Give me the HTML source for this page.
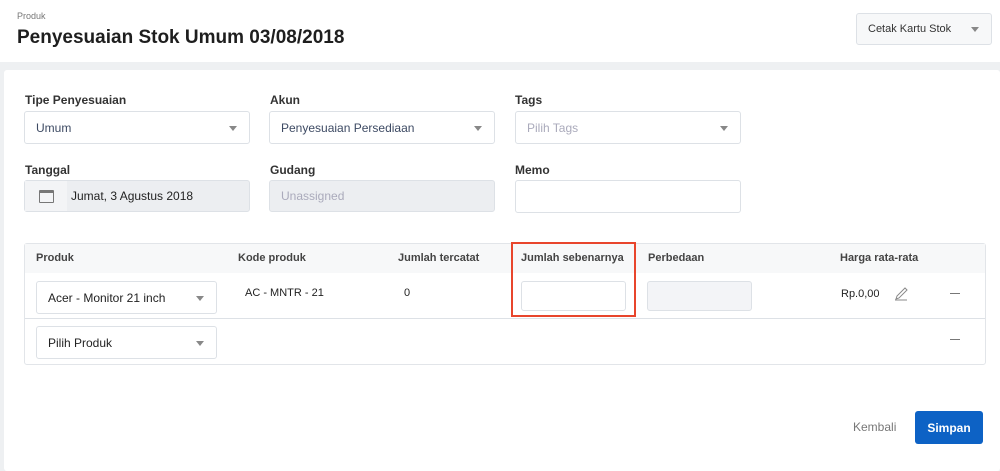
<!DOCTYPE html><html><head><style>
*{box-sizing:border-box;margin:0;padding:0}
body{width:1000px;height:471px;overflow:hidden;background:#eef0f2;font-family:"Liberation Sans",sans-serif;position:relative;color:#222}
.a{position:absolute}
.lbl{font-size:12px;font-weight:bold;color:#333}
.in{position:absolute;border:1px solid #dde1e6;border-radius:3px;background:#fff;font-size:12px;color:#3d4a63;padding-left:11px;display:flex;align-items:center}
.car{position:absolute;right:12px;top:50%;margin-top:-2px;border-left:4px solid transparent;border-right:4px solid transparent;border-top:5px solid #888}
.th{position:absolute;top:252px;font-size:11px;font-weight:bold;color:#444}
.td{position:absolute;font-size:11px;color:#222}
.dash{position:absolute;width:10px;height:1px;background:#777}
</style></head><body>
<div class="a" style="left:0;top:0;width:1000px;height:62px;background:#fff"></div>
<div class="a" style="left:17px;top:11px;font-size:9px;color:#777">Produk</div>
<div class="a" style="left:17px;top:27px;font-size:19px;font-weight:bold;color:#1e1e1e">Penyesuaian Stok Umum 03/08/2018</div>
<div class="in" style="left:856px;top:13px;width:136px;height:32px;background:#f7f8f9;color:#333;font-size:11px">Cetak Kartu Stok<span class="car"></span></div>
<div class="a" style="left:4px;top:70px;width:996px;height:401px;background:#fff;border-radius:3px"></div>
<div class="a lbl" style="left:25px;top:93px">Tipe Penyesuaian</div>
<div class="in" style="left:24px;top:111px;width:226px;height:33px">Umum<span class="car"></span></div>
<div class="a lbl" style="left:270px;top:93px">Akun</div>
<div class="in" style="left:269px;top:111px;width:226px;height:33px">Penyesuaian Persediaan<span class="car"></span></div>
<div class="a lbl" style="left:515px;top:93px">Tags</div>
<div class="in" style="left:515px;top:111px;width:226px;height:33px;color:#aab">Pilih Tags<span class="car"></span></div>
<div class="a lbl" style="left:25px;top:163px">Tanggal</div>
<div class="in" style="left:24px;top:180px;width:226px;height:32px;background:#eceef1;padding-left:0;color:#222">
<div style="width:42px;height:30px;background:#f3f4f6;display:flex;align-items:center;justify-content:center"><div style="width:15px;height:13px;border:1px solid #777;border-top-width:3px;border-radius:1px"></div></div><span style="margin-left:4px">Jumat, 3 Agustus 2018</span></div>
<div class="a lbl" style="left:270px;top:163px">Gudang</div>
<div class="in" style="left:269px;top:180px;width:226px;height:32px;background:#eceef1;color:#aab">Unassigned</div>
<div class="a lbl" style="left:515px;top:163px">Memo</div>
<div class="in" style="left:515px;top:180px;width:226px;height:33px"></div>
<div class="a" style="left:24px;top:243px;width:962px;height:122px;border:1px solid #e2e5e9;border-radius:3px"></div>
<div class="a" style="left:25px;top:244px;width:960px;height:29px;background:#f7f8f9"></div>
<div class="a" style="left:25px;top:318px;width:960px;height:1px;background:#dde1e6"></div>
<div class="th" style="left:36px">Produk</div>
<div class="th" style="left:238px">Kode produk</div>
<div class="th" style="left:398px">Jumlah tercatat</div>
<div class="th" style="left:521px">Jumlah sebenarnya</div>
<div class="th" style="left:648px">Perbedaan</div>
<div class="th" style="left:840px">Harga rata-rata</div>
<div class="in" style="left:36px;top:281px;width:181px;height:33px;color:#222">Acer - Monitor 21 inch<span class="car"></span></div>
<div class="td" style="left:245px;top:287px">AC - MNTR - 21</div>
<div class="td" style="left:404px;top:287px">0</div>
<div class="in" style="left:521px;top:281px;width:105px;height:30px"></div>
<div class="in" style="left:647px;top:281px;width:105px;height:30px;background:#f3f4f7"></div>
<div class="a" style="left:511px;top:242px;width:125px;height:75px;border:2px solid #e8452c"></div>
<div class="td" style="left:841px;top:288px">Rp.0,00</div>
<svg class="a" style="left:893px;top:286px" width="16" height="16" viewBox="0 0 16 16"><path d="M2 14h12M3 13l1-3 8-8 2 2-8 8z" fill="none" stroke="#888" stroke-width="1"/></svg>
<div class="dash" style="left:950px;top:293px"></div>
<div class="in" style="left:36px;top:326px;width:181px;height:33px;color:#222">Pilih Produk<span class="car"></span></div>
<div class="dash" style="left:950px;top:339px"></div>
<div class="a" style="left:853px;top:420px;font-size:12px;color:#777">Kembali</div>
<div class="a" style="left:915px;top:411px;width:68px;height:33px;background:#0d62c5;border-radius:3px;color:#fff;font-size:12px;font-weight:bold;display:flex;align-items:center;justify-content:center">Simpan</div>
</body></html>
